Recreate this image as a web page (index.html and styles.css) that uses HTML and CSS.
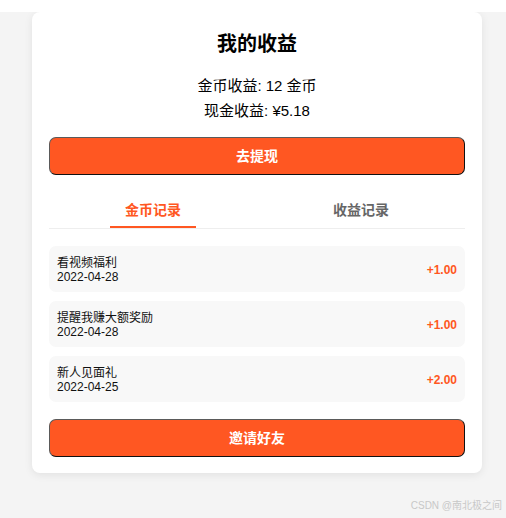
FILE: index.html
```html
<!DOCTYPE html>
<html lang="zh">
<head>
<meta charset="utf-8">
<title>我的收益</title>
<link rel="stylesheet" href="styles.css">
</head>
<body>
<div class="page">
  <div class="card">
    <h2 class="title">我的收益</h2>
    <div class="stats">
      <p class="stat">金币收益: 12 金币</p>
      <p class="stat">现金收益: ¥5.18</p>
    </div>
    <button class="btn btn-withdraw">去提现</button>
    <div class="tabs">
      <div class="tab active"><span class="tab-label">金币记录</span></div>
      <div class="tab"><span class="tab-label">收益记录</span></div>
    </div>
    <ul class="records">
      <li class="record">
        <div class="record-info">
          <div class="record-name">看视频福利</div>
          <div class="record-date">2022-04-28</div>
        </div>
        <div class="record-amount">+1.00</div>
      </li>
      <li class="record">
        <div class="record-info">
          <div class="record-name">提醒我赚大额奖励</div>
          <div class="record-date">2022-04-28</div>
        </div>
        <div class="record-amount">+1.00</div>
      </li>
      <li class="record">
        <div class="record-info">
          <div class="record-name">新人见面礼</div>
          <div class="record-date">2022-04-25</div>
        </div>
        <div class="record-amount">+2.00</div>
      </li>
    </ul>
    <button class="btn btn-invite">邀请好友</button>
  </div>
  <div class="watermark">CSDN @南北极之间</div>
</div>
</body>
</html>
```

FILE: styles.css
```css
html, body {
  margin: 0;
  padding: 0;
  background: #ffffff;
  font-family: "Liberation Sans", "Noto Sans CJK SC", sans-serif;
  color: #000;
}

.page {
  position: relative;
  margin-top: 12px;
  height: 506px;
  background: #f4f4f4;
  padding-left: 32px;
  box-sizing: border-box;
  overflow: hidden;
}

.card {
  width: 450px;
  box-sizing: border-box;
  background: #ffffff;
  border-radius: 8px;
  box-shadow: 0 2px 8px rgba(0, 0, 0, 0.08);
  padding: 18px 17px 16px;
}

.title {
  margin: 0;
  font-size: 20px;
  line-height: 28px;
  font-weight: bold;
  text-align: center;
}

.stats {
  margin-top: 15px;
  text-align: center;
}

.stat {
  margin: 0;
  font-size: 15px;
  line-height: 25px;
}

.btn {
  display: block;
  width: 100%;
  box-sizing: border-box;
  background: #ff5722;
  color: #ffffff;
  font-family: inherit;
  font-size: 14px;
  font-weight: bold;
  line-height: 16px;
  padding: 10px 0;
  border: 1px solid;
  border-color: #5a5a5a #111 #111 #5a5a5a;
  border-radius: 7px;
  text-align: center;
}

.btn-withdraw {
  margin-top: 14px;
}

.tabs {
  display: flex;
  margin-top: 19px;
  border-bottom: 1px solid #eeeeee;
}

.tab {
  flex: 1;
  text-align: center;
}

.tab-label {
  display: inline-block;
  padding: 6px 15px;
  font-size: 14px;
  line-height: 20px;
  font-weight: bold;
  color: #666666;
  border-bottom: 2px solid transparent;
}

.tab.active .tab-label {
  color: #ff5722;
  border-bottom-color: #ff5722;
}

.records {
  list-style: none;
  margin: 17px 0 0;
  padding: 0;
  display: flex;
  flex-direction: column;
  gap: 9px;
}

.record {
  display: flex;
  align-items: center;
  justify-content: space-between;
  background: #f8f8f8;
  border-radius: 7px;
  padding: 10px 8px 8px;
}

.record-name,
.record-date {
  font-size: 12px;
  line-height: 14px;
  color: #111;
}

.record-amount {
  font-size: 12px;
  font-weight: bold;
  color: #ff5722;
}

.btn-invite {
  margin-top: 17px;
}

.watermark {
  position: absolute;
  right: 4px;
  bottom: 6px;
  font-size: 10px;
  line-height: 12px;
  color: #c8c8c8;
}
```
